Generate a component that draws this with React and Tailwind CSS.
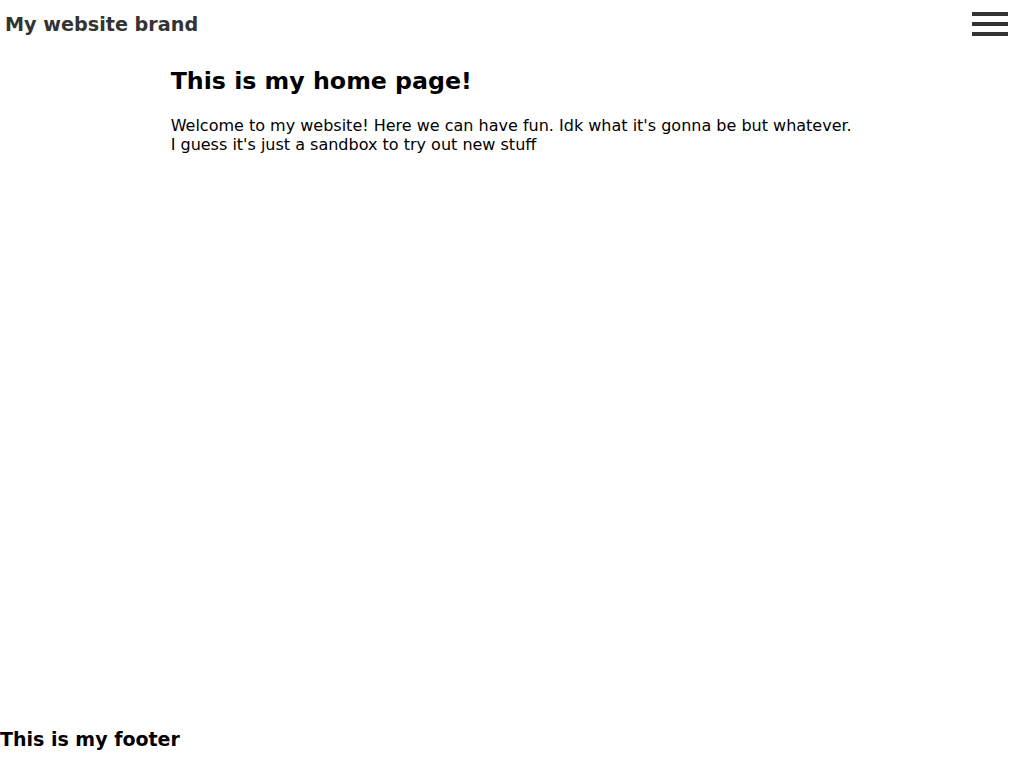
import React from "react";

const Header = () => (
  <header className="flex h-12 items-center justify-between pl-[5px] pr-4">
    <a href="#" className="text-[19.2px] font-bold leading-[normal] text-[#333]">
      My website brand
    </a>
    <button type="button" aria-label="Menu" className="flex flex-col gap-[6px]">
      <span className="block h-1 w-9 bg-[#333]" />
      <span className="block h-1 w-9 bg-[#333]" />
      <span className="block h-1 w-9 bg-[#333]" />
    </button>
  </header>
);

export default function App() {
  return (
    <div
      className="flex min-h-screen flex-col bg-white text-black"
      style={{ fontFamily: '"DejaVu Sans", sans-serif' }}
    >
      <Header />

      {/* Page content */}
      <main className="mx-auto w-2/3 flex-1">
        <h2 className="mt-[19px] text-[23.7px] font-bold leading-[normal]">This is my home page!</h2>
        <p className="mt-[21px] text-base leading-[normal]">
          Welcome to my website! Here we can have fun. Idk what it's gonna be but whatever. I guess it's
          just a sandbox to try out new stuff
        </p>
      </main>

      <footer>
        <h3 className="mb-[18.5px] text-[19px] font-bold leading-[normal]">This is my footer</h3>
      </footer>
    </div>
  );
}
